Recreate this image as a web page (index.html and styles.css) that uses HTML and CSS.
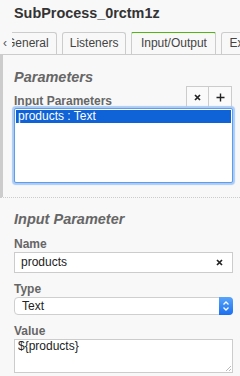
FILE: index.html
```html
<!DOCTYPE html>
<html>
    <head>
        <title>Properties panel</title>
        <link rel="stylesheet" href="styles.css">
    </head>
    <body>
        <div class="panel">
            <div class="panel-title">SubProcess_0rctm1z</div>
            <div class="tabs">
                <span class="tab-scroll">&#8249;</span>
                <ul class="tab-list">
                    <li class="tab">General</li>
                    <li class="tab">Listeners</li>
                    <li class="tab active">Input/Output</li>
                    <li class="tab">Extensions</li>
                </ul>
            </div>
            <div class="group group-params">
                <div class="group-label">Parameters</div>
                <div class="field-head">
                    <label class="field-label">Input Parameters</label>
                    <div class="list-actions">
                        <button class="action">
                            <svg width="7" height="7" viewBox="0 0 7 7"><path d="M1 1L6 6M6 1L1 6" stroke="#222" stroke-width="1.7"/></svg>
                        </button>
                        <button class="action">
                            <svg width="9" height="9" viewBox="0 0 9 9"><path d="M4.5 0.5V8.5M0.5 4.5H8.5" stroke="#222" stroke-width="1.4"/></svg>
                        </button>
                    </div>
                </div>
                <div class="listbox">
                    <div class="option selected">products : Text</div>
                </div>
            </div>
            <div class="group group-detail">
                <div class="group-label">Input Parameter</div>
                <div class="field">
                    <label class="field-label">Name</label>
                    <div class="text-input">
                        <span>products</span>
                        <span class="clear">
                            <svg width="7" height="7" viewBox="0 0 7 7"><path d="M1 1L6 6M6 1L1 6" stroke="#222" stroke-width="1.7"/></svg>
                        </span>
                    </div>
                </div>
                <div class="field">
                    <label class="field-label">Type</label>
                    <div class="select">
                        <span>Text</span>
                        <span class="select-arrow">
                            <svg width="8" height="12" viewBox="0 0 8 12"><path d="M1.5 4.5L4 2L6.5 4.5M1.5 7.5L4 10L6.5 7.5" stroke="#fff" stroke-width="1.3" fill="none"/></svg>
                        </span>
                    </div>
                </div>
                <div class="field">
                    <label class="field-label">Value</label>
                    <div class="textarea">
                        ${products}
                        <svg class="grip" width="6" height="6" viewBox="0 0 6 6"><path d="M1 6L6 1M4 6L6 4" stroke="#aaa" stroke-width="0.8"/></svg>
                    </div>
                </div>
            </div>
        </div>
    </body>
</html>
```

FILE: styles.css
```css
body {
    margin: 0;
    background: #f8f8f8;
    font-family: "Liberation Sans", Arial, sans-serif;
    color: #333;
}

.panel {
    width: 240px;
    height: 376px;
    overflow: hidden;
}

.panel-title {
    padding: 4px 14px 0;
    font-size: 14.4px;
    line-height: 18px;
    font-weight: bold;
    color: #333;
}

/* tabs */
.tabs {
    position: relative;
    margin-top: 10px;
    border-bottom: 1px solid #ccc;
    overflow: hidden;
}

.tab-scroll {
    position: absolute;
    left: 0;
    top: 0;
    z-index: 1;
    width: 12px;
    height: 22px;
    line-height: 22px;
    padding-left: 3px;
    box-sizing: border-box;
    background: #f8f8f8;
    font-size: 12px;
    color: #555;
}

.tab-list {
    display: flex;
    align-items: flex-end;
    gap: 5px;
    height: 22px;
    margin: 0 0 0 -2px;
    padding: 0;
    list-style: none;
}

.tab {
    flex: none;
    padding: 0 7px;
    border: 1px solid #ccc;
    border-bottom: none;
    border-radius: 3px 3px 0 0;
    font-size: 12px;
    line-height: 21px;
    color: #444;
    white-space: nowrap;
}

.tab.active {
    padding: 0 8.5px 1px;
    border-top: 2px solid #52b415;
    margin-bottom: -1px;
    background: #f8f8f8;
}

/* groups */
.group {
    border-bottom: 1px dotted #ccc;
    padding: 0 7px 0 14px;
}

.group-params {
    border-left: 3px solid #ccc;
    padding: 13px 7px 14px 11px;
}

.group-detail {
    border-bottom: none;
    padding-top: 12px;
}

.group-label {
    font-size: 14.5px;
    line-height: 18px;
    font-weight: bold;
    font-style: italic;
    color: #666;
}

.field-label {
    display: block;
    font-size: 12px;
    line-height: 15px;
    font-weight: bold;
    color: #666;
}

.field-head {
    display: flex;
    justify-content: space-between;
    align-items: flex-end;
}

.list-actions {
    display: flex;
    margin-right: 1px;
}

.action {
    display: flex;
    align-items: center;
    justify-content: center;
    width: 23px;
    height: 23px;
    padding: 0;
    border: 1px solid #ccc;
    background: #fafafa;
}

.action + .action {
    border-left: none;
}

.listbox {
    position: relative;
    height: 71px;
    margin-top: -1px;
    padding: 1px;
    border: 1px solid #5f9cea;
    border-radius: 2px;
    background: #fff;
    box-shadow: 0 0 1px 2px #a9cbf6;
}

.option {
    padding: 0 2px;
    font-size: 12px;
    line-height: 13px;
}

.option.selected {
    background: #1063d6;
    color: #fff;
}

/* fields */
.field {
    margin-top: 9px;
}

.field:first-of-type {
    margin-top: 8px;
}

.text-input {
    position: relative;
    height: 19px;
    padding-left: 6px;
    border: 1px solid #ccc;
    background: #fff;
    font-size: 12px;
    line-height: 19px;
    color: #222;
}

.clear {
    position: absolute;
    right: 9px;
    top: 6px;
    line-height: 0;
}

.select {
    display: flex;
    justify-content: space-between;
    height: 16px;
    border: 1px solid #cfcfcf;
    border-radius: 4px;
    background: #fff;
    font-size: 12px;
    line-height: 16px;
    color: #222;
}

.select span:first-child {
    padding-left: 7px;
}

.select-arrow {
    display: flex;
    align-items: center;
    justify-content: center;
    width: 14px;
    margin: -1px -1px -1px 0;
    border-radius: 0 4px 4px 0;
    background: linear-gradient(#58a4fa, #1b6ff0);
}

.textarea {
    position: relative;
    height: 32px;
    padding: 0 3px;
    border: 1px solid #ccc;
    background: #fff;
    font-size: 12px;
    line-height: 13px;
    color: #222;
}

.grip {
    position: absolute;
    right: 1px;
    bottom: 1px;
}
```
